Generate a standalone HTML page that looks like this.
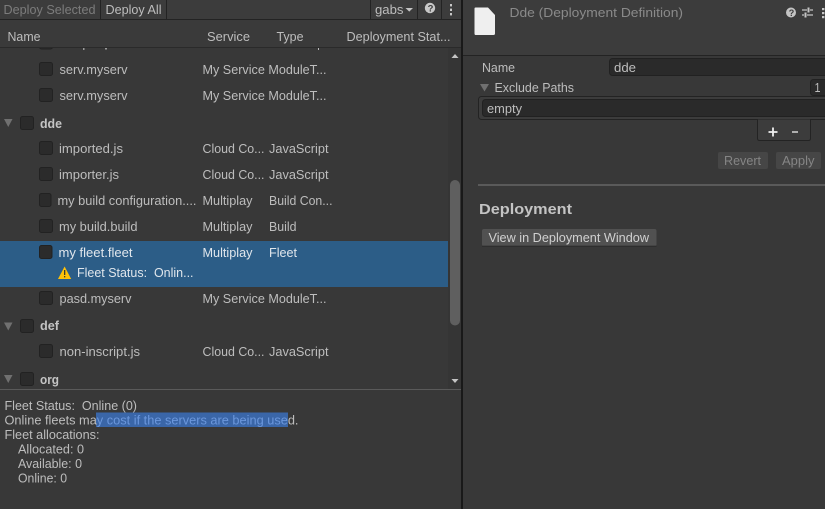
<!DOCTYPE html>
<html><head><meta charset="utf-8"><style>
html,body{margin:0;padding:0;background:#383838;width:825px;height:509px;overflow:hidden}
svg{display:block}
text{font-family:"Liberation Sans",sans-serif;font-size:12.5px;fill:#bdbdbd}
.b{font-weight:bold;fill:#c4c4c4}
.d{fill:#7c7c7c}
.s{fill:#e0e6ec}
.cb{fill:#2b2b2b;stroke:#222;stroke-width:1}
.tri{fill:#707070}
.sep{fill:#232323}
</style></head><body>
<svg width="825" height="509" viewBox="0 0 825 509" xmlns="http://www.w3.org/2000/svg">
<defs><clipPath id="c"><rect x="0" y="48" width="448" height="341"/></clipPath></defs>
<rect width="825" height="509" fill="#383838"/>
<!-- toolbar -->
<rect x="0" y="0" width="461" height="19" fill="#3c3c3c"/>
<rect x="0" y="19" width="461" height="1" class="sep"/>
<rect x="100" y="0" width="1" height="19" class="sep"/>
<rect x="166" y="0" width="1" height="19" class="sep"/>
<rect x="370" y="0" width="1" height="19" class="sep"/>
<rect x="417" y="0" width="1" height="19" class="sep"/>
<rect x="441" y="0" width="1" height="19" class="sep"/>
<text x="3.5" y="14" class="d" textLength="92" lengthAdjust="spacingAndGlyphs">Deploy Selected</text>
<text x="105.5" y="14" textLength="56" lengthAdjust="spacingAndGlyphs">Deploy All</text>
<text x="375" y="14" textLength="28.5" lengthAdjust="spacingAndGlyphs">gabs</text>
<path d="M405.5 8h7.5l-3.75 3.6z" fill="#c4c4c4"/>
<circle cx="430" cy="8" r="5.2" fill="#c8c8c8"/>
<text x="427.6" y="11.4" style="font-size:9.5px;font-weight:bold;fill:#3c3c3c">?</text>
<rect x="450" y="4" width="2" height="2.4" fill="#c8c8c8"/><rect x="450" y="8.6" width="2" height="2.4" fill="#c8c8c8"/><rect x="450" y="13" width="2" height="2.4" fill="#c8c8c8"/>
<!-- header -->
<rect x="0" y="20" width="461" height="27" fill="#3a3a3a"/>
<rect x="0" y="47" width="461" height="1" fill="#2a2a2a"/>
<text x="7.5" y="41" textLength="33" lengthAdjust="spacingAndGlyphs">Name</text>
<text x="207" y="41" textLength="43" lengthAdjust="spacingAndGlyphs">Service</text>
<text x="276.5" y="41" textLength="27" lengthAdjust="spacingAndGlyphs">Type</text>
<text x="346.5" y="41" textLength="104" lengthAdjust="spacingAndGlyphs">Deployment Stat...</text>
<!-- selected row -->
<rect x="0" y="241" width="448" height="46" fill="#2c5d87"/>
<!-- list -->
<g clip-path="url(#c)">
<rect class="cb" x="39.5" y="40.5" width="13" height="8.5" rx="2"/>
</g>
<rect x="83" y="48" width="1.5" height="2" fill="#9a9a9a"/><rect x="105" y="48" width="2" height="1.5" fill="#9a9a9a"/><rect x="318" y="48" width="1" height="2" fill="#bbb"/>
<rect class="cb" x="39.5" y="62.5" width="13" height="13" rx="2"/>
<text x="59.5" y="74" textLength="68" lengthAdjust="spacingAndGlyphs">serv.myserv</text>
<text x="202.5" y="74" textLength="124" lengthAdjust="spacingAndGlyphs">My Service ModuleT...</text>
<rect class="cb" x="39.5" y="88.5" width="13" height="13" rx="2"/>
<text x="59.5" y="100" textLength="68" lengthAdjust="spacingAndGlyphs">serv.myserv</text>
<text x="202.5" y="100" textLength="124" lengthAdjust="spacingAndGlyphs">My Service ModuleT...</text>
<path class="tri" d="M4 119h8.5l-4.25 8z"/>
<rect class="cb" x="20.5" y="116.5" width="13" height="13" rx="2"/>
<text x="40" y="128" class="b" textLength="22" lengthAdjust="spacingAndGlyphs">dde</text>
<rect class="cb" x="39.5" y="141.5" width="13" height="13" rx="2"/>
<text x="59" y="153" textLength="64" lengthAdjust="spacingAndGlyphs">imported.js</text>
<text x="202.5" y="153" textLength="62" lengthAdjust="spacingAndGlyphs">Cloud Co...</text>
<text x="269" y="153" textLength="59.5" lengthAdjust="spacingAndGlyphs">JavaScript</text>
<rect class="cb" x="39.5" y="167.5" width="13" height="13" rx="2"/>
<text x="59" y="179" textLength="60" lengthAdjust="spacingAndGlyphs">importer.js</text>
<text x="202.5" y="179" textLength="62" lengthAdjust="spacingAndGlyphs">Cloud Co...</text>
<text x="269" y="179" textLength="59.5" lengthAdjust="spacingAndGlyphs">JavaScript</text>
<rect class="cb" x="39.5" y="193.5" width="11.5" height="13" rx="2"/>
<text x="57.5" y="205" textLength="139" lengthAdjust="spacingAndGlyphs">my build configuration....</text>
<text x="202.5" y="205" textLength="50" lengthAdjust="spacingAndGlyphs">Multiplay</text>
<text x="269" y="205" textLength="63.5" lengthAdjust="spacingAndGlyphs">Build Con...</text>
<rect class="cb" x="39.5" y="219.5" width="13" height="13" rx="2"/>
<text x="59" y="231" textLength="78.5" lengthAdjust="spacingAndGlyphs">my build.build</text>
<text x="202.5" y="231" textLength="50" lengthAdjust="spacingAndGlyphs">Multiplay</text>
<text x="269" y="231" textLength="27.5" lengthAdjust="spacingAndGlyphs">Build</text>
<rect class="cb" x="39.5" y="245.5" width="12.5" height="13" rx="2"/>
<text x="58.5" y="257" class="s" textLength="74" lengthAdjust="spacingAndGlyphs">my fleet.fleet</text>
<text x="202.5" y="257" class="s" textLength="50" lengthAdjust="spacingAndGlyphs">Multiplay</text>
<text x="269" y="257" class="s" textLength="28" lengthAdjust="spacingAndGlyphs">Fleet</text>
<path d="M64.6 266.5 71.2 279H58z" fill="#ffc107"/>
<rect x="64" y="270" width="1.3" height="5" fill="#3a3a2a"/><rect x="64" y="276" width="1.3" height="1.4" fill="#3a3a2a"/>
<text x="77" y="277" class="s" textLength="116.5" lengthAdjust="spacingAndGlyphs" xml:space="preserve">Fleet Status:  Onlin...</text>
<rect class="cb" x="39.5" y="291.5" width="13" height="13" rx="2"/>
<text x="59.5" y="303" textLength="72" lengthAdjust="spacingAndGlyphs">pasd.myserv</text>
<text x="202.5" y="303" textLength="124" lengthAdjust="spacingAndGlyphs">My Service ModuleT...</text>
<path class="tri" d="M4 322.5h8.5l-4.25 8z"/>
<rect class="cb" x="20.5" y="319.5" width="13" height="13" rx="2"/>
<text x="40" y="330" class="b" textLength="19" lengthAdjust="spacingAndGlyphs">def</text>
<rect class="cb" x="39.5" y="344.5" width="13" height="13" rx="2"/>
<text x="59.5" y="356" textLength="80.5" lengthAdjust="spacingAndGlyphs">non-inscript.js</text>
<text x="202.5" y="356" textLength="62" lengthAdjust="spacingAndGlyphs">Cloud Co...</text>
<text x="269" y="356" textLength="59.5" lengthAdjust="spacingAndGlyphs">JavaScript</text>
<path class="tri" d="M4 375h8.5l-4.25 8z"/>
<rect class="cb" x="20.5" y="372.5" width="13" height="13" rx="2"/>
<text x="40" y="384" class="b" textLength="19" lengthAdjust="spacingAndGlyphs">org</text>
<!-- scrollbar -->
<rect x="448" y="48" width="13" height="341" fill="#353535"/>
<rect x="450" y="180" width="10" height="145.5" rx="5" fill="#5f5f5f"/>
<path d="M451.5 58h7l-3.5-4z" fill="#c4c4c4"/>
<path d="M451.5 379h7l-3.5 4z" fill="#c4c4c4"/>
<!-- divider & details -->
<rect x="0" y="389" width="461" height="1" fill="#5a5a5a"/>
<rect x="461" y="0" width="2" height="509" fill="#191919"/>
<rect x="96" y="412.5" width="192" height="14.5" fill="#3a66a8"/>
<text x="4.5" y="410" textLength="132.5" lengthAdjust="spacingAndGlyphs" xml:space="preserve">Fleet Status:  Online (0)</text>
<text x="4.5" y="424.5" textLength="294" lengthAdjust="spacingAndGlyphs">Online fleets ma<tspan style="fill:#6b97dc">y cost if the servers are being use</tspan>d.</text>
<text x="4.5" y="439" textLength="95" lengthAdjust="spacingAndGlyphs">Fleet allocations:</text>
<text x="18" y="453.5" textLength="66" lengthAdjust="spacingAndGlyphs">Allocated: 0</text>
<text x="18" y="468" textLength="64" lengthAdjust="spacingAndGlyphs">Available: 0</text>
<text x="18" y="482.5" textLength="49" lengthAdjust="spacingAndGlyphs">Online: 0</text>
<!-- inspector header -->
<rect x="463" y="0" width="362" height="55" fill="#3c3c3c"/>
<rect x="463" y="55" width="362" height="1" fill="#232323"/>
<path d="M475.5 7.5h12.5l7 7.5v18.5q0 1.5-1.5 1.5h-18q-1 0-1-1.5V8.5q0-1 1-1z" fill="#efefef"/>
<text x="509.5" y="17" style="fill:#8a8a8a;font-size:13px" textLength="173.5" lengthAdjust="spacingAndGlyphs">Dde (Deployment Definition)</text>
<circle cx="791" cy="12.5" r="5" fill="#c4c4c4"/>
<text x="788.7" y="15.8" style="font-size:9px;font-weight:bold;fill:#3c3c3c">?</text>
<path d="M802 10h5M810 10h3M802 15h2M807 15h6" stroke="#c4c4c4" stroke-width="1.2" fill="none"/>
<path d="M808.5 7.5v5M805.5 12.5v5" stroke="#c4c4c4" stroke-width="2" fill="none"/>
<rect x="822" y="8" width="2.4" height="2.2" fill="#c8c8c8"/><rect x="822" y="12" width="2.4" height="2.2" fill="#c8c8c8"/><rect x="822" y="16" width="2.4" height="2.2" fill="#c8c8c8"/>
<!-- fields -->
<text x="482" y="72" textLength="33" lengthAdjust="spacingAndGlyphs">Name</text>
<rect x="609.5" y="58.5" width="225" height="17" rx="3" fill="#2a2a2a" stroke="#212121"/>
<text x="614" y="72" textLength="22" lengthAdjust="spacingAndGlyphs">dde</text>
<path class="tri" d="M480 84h9l-4.5 7.5z"/>
<text x="494.5" y="92" textLength="79.5" lengthAdjust="spacingAndGlyphs">Exclude Paths</text>
<rect x="810.5" y="79.5" width="25" height="16" rx="3" fill="#2a2a2a" stroke="#212121"/>
<text x="814.5" y="92" textLength="6" lengthAdjust="spacingAndGlyphs">1</text>
<rect x="478.5" y="96.5" width="357" height="23" rx="3" fill="#3c3c3c" stroke="#232323"/>
<rect x="482.5" y="99.5" width="353" height="17" rx="3" fill="#2a2a2a" stroke="#212121"/>
<text x="487" y="113" textLength="35" lengthAdjust="spacingAndGlyphs">empty</text>
<path d="M757.5 119.5v19q0 2 2 2h49q2 0 2-2v-19" fill="#3c3c3c" stroke="#232323"/>
<path d="M768.5 132h9M773 127.5v9" stroke="#eee" stroke-width="1.8" fill="none"/>
<path d="M792 132h6" stroke="#ccc" stroke-width="1.6" fill="none"/>
<rect x="718" y="152" width="50" height="17" rx="2" fill="#464646"/>
<text x="724" y="165" style="fill:#858585" textLength="37" lengthAdjust="spacingAndGlyphs">Revert</text>
<rect x="776" y="152" width="45" height="17" rx="2" fill="#464646"/>
<text x="782" y="165" style="fill:#858585" textLength="32.5" lengthAdjust="spacingAndGlyphs">Apply</text>
<rect x="478" y="184" width="347" height="2" fill="#5a5a5a"/>
<text x="479" y="214" class="b" style="font-size:15px" textLength="93" lengthAdjust="spacingAndGlyphs">Deployment</text>
<rect x="482" y="229" width="174.5" height="17.5" rx="2" fill="#515151"/>
<rect x="482" y="245.7" width="174.5" height="1" fill="#2a2a2a"/>
<text x="488.5" y="242" style="fill:#d0d0d0" textLength="160.5" lengthAdjust="spacingAndGlyphs">View in Deployment Window</text>
</svg>
</body></html>
